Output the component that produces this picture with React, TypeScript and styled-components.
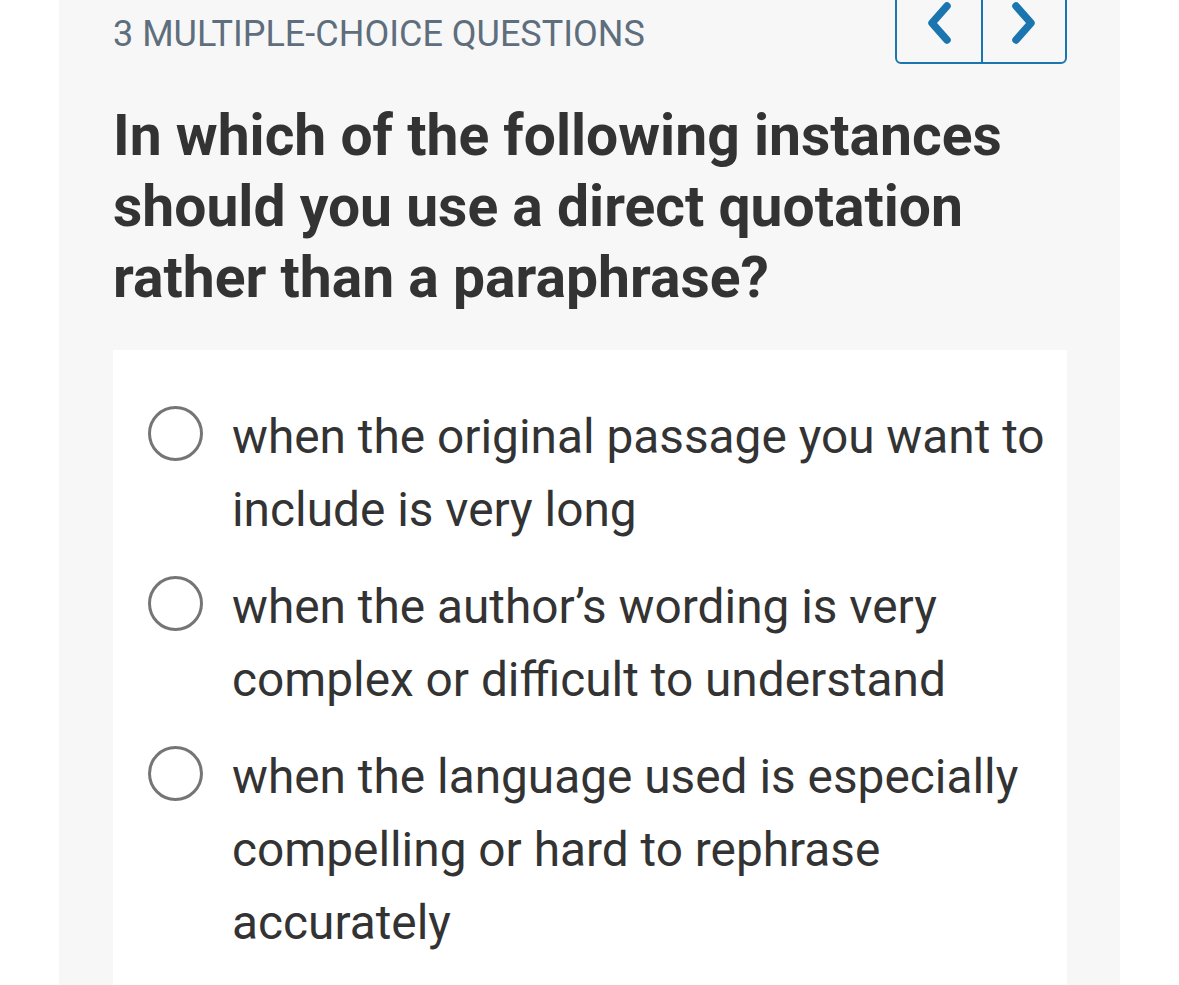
import { FC } from "react";
import styled, { createGlobalStyle } from "styled-components";

const GlobalStyle = createGlobalStyle`
  html, body {
    margin: 0;
    padding: 0;
    background: #ffffff;
    font-family: Roboto, "Liberation Sans", Arial, sans-serif;
  }
`;

const options = [
  "when the original passage you want to include is very long",
  "when the author\u2019s wording is very complex or difficult to understand",
  "when the language used is especially compelling or hard to rephrase accurately",
];

const Chevron: FC<{ dir: "left" | "right" }> = ({ dir }) => (
  <svg width="28" height="44" viewBox="0 0 28 44">
    <path
      d={dir === "left" ? "M22 5 L7 22 L22 39" : "M6 5 L21 22 L6 39"}
      fill="none"
      stroke="#1b75ae"
      strokeWidth="7.5"
      strokeLinecap="round"
      strokeLinejoin="round"
    />
  </svg>
);

const App: FC = () => {
  return (
    <>
      <GlobalStyle />
      <Panel>
        <Header>
          <Eyebrow>3 MULTIPLE-CHOICE QUESTIONS</Eyebrow>
          <Nav>
            <NavButton aria-label="Previous">
              <Chevron dir="left" />
            </NavButton>
            <NavButton aria-label="Next" $divider>
              <Chevron dir="right" />
            </NavButton>
          </Nav>
        </Header>
        <Question>
          In which of the following instances should you use a direct quotation
          rather than a paraphrase?
        </Question>
        <Card>
          {options.map((text) => (
            <Option key={text}>
              <Radio />
              <OptionText>{text}</OptionText>
            </Option>
          ))}
        </Card>
      </Panel>
    </>
  );
};

export default App;

const Panel = styled.div`
  margin: -10px 59px 0;
  min-height: 1100px;
  background: #f7f7f7;
  padding: 0 53px 0 54px;
`;

const Header = styled.div`
  display: flex;
  justify-content: space-between;
  align-items: flex-start;
`;

const Eyebrow = styled.div`
  font-size: 36px;
  color: #5e6e7d;
  padding-top: 23px;
`;

const Nav = styled.div`
  display: flex;
  height: 74px;
  border: 2px solid #1b75ae;
  border-radius: 0 0 6px 6px;
  box-sizing: border-box;
`;

const NavButton = styled.button<{ $divider?: boolean }>`
  width: 84px;
  height: 100%;
  display: flex;
  align-items: center;
  justify-content: center;
  padding: 0 0 8px;
  border: none;
  border-left: ${(p) => (p.$divider ? "2px solid #1b75ae" : "none")};
  background: transparent;
  cursor: pointer;
`;

const Question = styled.h1`
  margin: 36px 0 0;
  font-size: 57px;
  line-height: 71px;
  font-weight: 700;
  color: #333333;
  max-width: 930px;
`;

const Card = styled.div`
  margin-top: 37px;
  background: #ffffff;
  padding: 51px 8px 40px 35px;
  display: flex;
  flex-direction: column;
  gap: 24px;
`;

const Option = styled.label`
  display: flex;
  align-items: flex-start;
  gap: 29px;
  cursor: pointer;
`;

const Radio = styled.span`
  flex: none;
  width: 55px;
  height: 55px;
  box-sizing: border-box;
  border: 3px solid #757575;
  border-radius: 50%;
  margin-top: 5px;
`;

const OptionText = styled.span`
  font-size: 47.8px;
  line-height: 73px;
  color: #333333;
`;
